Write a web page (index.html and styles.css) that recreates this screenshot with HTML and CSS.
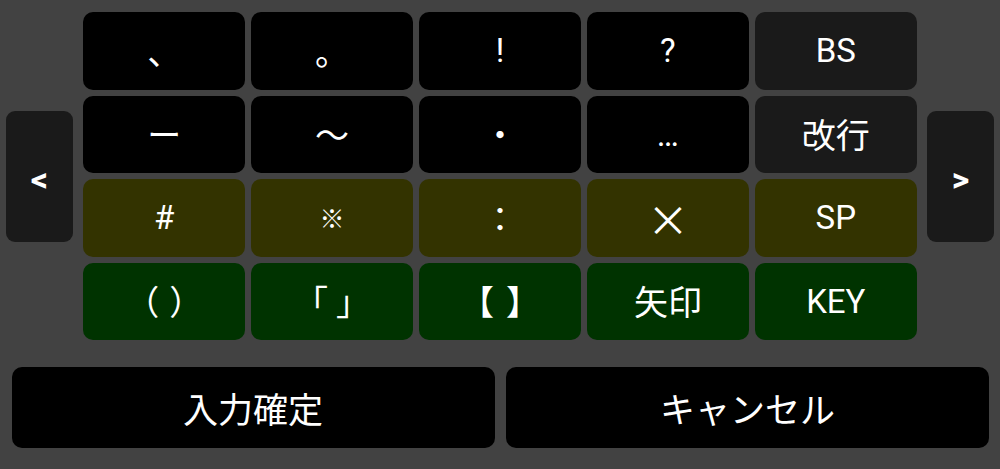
FILE: index.html
```html
<!DOCTYPE html>
<html lang="ja">
<head>
<meta charset="utf-8">
<title>Keyboard</title>
<link rel="stylesheet" href="styles.css">
</head>
<body>
<div class="kb">
  <div class="top">
    <div class="arrow">&lt;</div>
    <div class="grid">
      <div class="key jp">、</div>
      <div class="key jp">。</div>
      <div class="key">!</div>
      <div class="key">?</div>
      <div class="key fn">BS</div>

      <div class="key jp">ー</div>
      <div class="key jp">〜</div>
      <div class="key jp">・</div>
      <div class="key">…</div>
      <div class="key fn jp">改行</div>

      <div class="key olive">#</div>
      <div class="key olive jp kome">※</div>
      <div class="key olive jp">：</div>
      <div class="key olive jp big">×</div>
      <div class="key olive">SP</div>

      <div class="key green jp"><span class="open p1">（</span><span>）</span></div>
      <div class="key green jp"><span class="open p2">「</span><span>」</span></div>
      <div class="key green jp"><span class="open p3">【</span><span>】</span></div>
      <div class="key green jp">矢印</div>
      <div class="key green">KEY</div>
    </div>
    <div class="arrow">&gt;</div>
  </div>
  <div class="bottom">
    <div class="btn">入力確定</div>
    <div class="btn">キャンセル</div>
  </div>
</div>
</body>
</html>
```

FILE: styles.css
```css
html, body {
  margin: 0;
  padding: 0;
  background: #424242;
}

body {
  width: 1000px;
  height: 469px;
  overflow: hidden;
  font-family: Roboto, "Noto Sans CJK JP", sans-serif;
  color: #ffffff;
}

.top {
  display: flex;
  align-items: center;
  gap: 10px;
  padding: 12px 6px 0 6px;
}

.arrow {
  width: 67px;
  height: 131px;
  flex: none;
  background: #1a1a1a;
  border-radius: 9px;
  display: flex;
  align-items: center;
  justify-content: center;
  font-size: 34px;
  font-weight: 700;
  line-height: 1;
  padding-top: 6px;
  box-sizing: border-box;
}

.grid {
  width: 834px;
  flex: none;
  display: grid;
  grid-template-columns: repeat(5, 1fr);
  grid-template-rows: repeat(4, 77.5px);
  column-gap: 5.5px;
  row-gap: 6px;
}

.key {
  background: #000000;
  border-radius: 10px;
  display: flex;
  align-items: center;
  justify-content: center;
  font-size: 33px;
  line-height: 1;
}

.key.jp {
  font-family: "Noto Sans CJK JP", sans-serif;
  font-size: 34px;
}

.open.p1 {
  margin-right: 10px;
}

.open.p2 {
  margin-right: 8px;
}

.open.p3 {
  margin-right: 12px;
}

.key.kome {
  font-size: 25px;
  font-weight: 700;
}

.key.big {
  font-size: 42px;
}

.key.fn {
  background: #1a1a1a;
}

.key.olive {
  background: #333300;
}

.key.green {
  background: #003300;
}

.bottom {
  display: flex;
  gap: 11.5px;
  padding: 27px 11px 0 11.5px;
}

.btn {
  flex: 1;
  height: 81px;
  background: #000000;
  border-radius: 10px;
  display: flex;
  align-items: center;
  justify-content: center;
  font-family: "Noto Sans CJK JP", sans-serif;
  font-size: 35px;
  line-height: 1;
}
```
